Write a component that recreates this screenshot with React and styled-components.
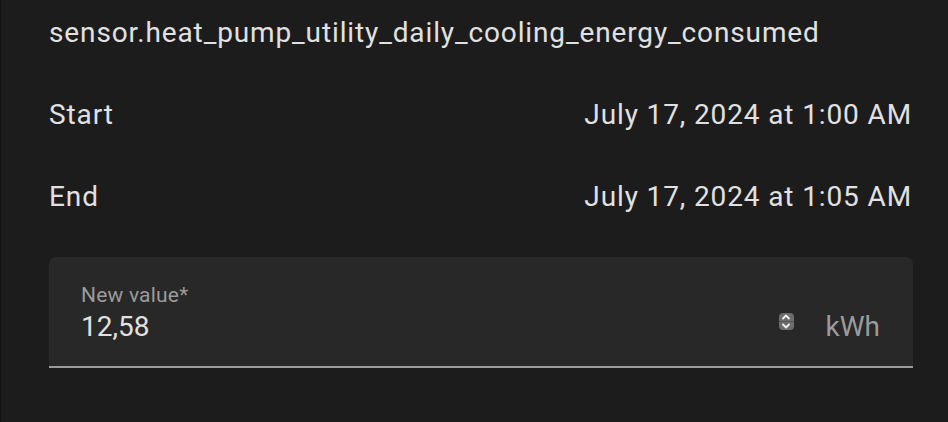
import React from "react";
import styled, { createGlobalStyle } from "styled-components";

const GlobalStyle = createGlobalStyle`
  html, body {
    margin: 0;
    padding: 0;
    background: #1c1c1c;
  }
  body {
    font-family: Roboto, "Noto Sans", "Liberation Sans", sans-serif;
    -webkit-font-smoothing: antialiased;
  }
`;

const Dialog = styled.div`
  width: 948px;
  height: 422px;
  box-sizing: border-box;
  border-left: 1px solid #131313;
  background: #1c1c1c;
  color: #e1e1e1;
  padding: 16px 35px 0 48px;
  font-size: 28px;
  line-height: 34px;
  letter-spacing: 0.875px;
`;

const EntityId = styled.div``;

const InfoRow = styled.div`
  display: flex;
  justify-content: space-between;
  margin-top: 48px;
  padding-right: 1px;
`;

const Field = styled.div`
  margin-top: 43px;
  background: #282828;
  border-radius: 7px 7px 0 0;
  border-bottom: 2px solid #9a9a9a;
  padding: 26px 33px 22px 32px;
`;

const FieldLabel = styled.div`
  font-size: 21px;
  line-height: 24px;
  letter-spacing: 0.2px;
  color: #9b9b9b;
`;

const InputRow = styled.div`
  display: flex;
  align-items: center;
  margin-top: 3px;
  letter-spacing: 0;
`;

const Value = styled.div`
  flex: 1;
`;

const Spinner = styled.div`
  width: 15px;
  height: 17px;
  border-radius: 4px;
  background: #6c6c6c;
  display: flex;
  flex-direction: column;
  align-items: center;
  justify-content: space-between;
  margin-top: -11px;
  overflow: hidden;
  svg {
    display: block;
  }
`;

const SpinDivider = styled.div`
  width: 100%;
  height: 1px;
  background: #575757;
`;

const Suffix = styled.div`
  color: #9b9b9b;
  margin-left: 32px;
`;

const Chevron = ({ up }) => (
  <svg width="10" height="8" viewBox="0 0 10 8">
    <path
      d={up ? "M2 5.5 L5 2.5 L8 5.5" : "M2 2.5 L5 5.5 L8 2.5"}
      fill="none"
      stroke="#f0f0f0"
      strokeWidth="1.8"
      strokeLinecap="round"
      strokeLinejoin="round"
    />
  </svg>
);

export default function App() {
  return (
    <>
      <GlobalStyle />
      <Dialog>
        <EntityId>sensor.heat_pump_utility_daily_cooling_energy_consumed</EntityId>
        <InfoRow>
          <span>Start</span>
          <span>July 17, 2024 at 1:00 AM</span>
        </InfoRow>
        <InfoRow>
          <span>End</span>
          <span>July 17, 2024 at 1:05 AM</span>
        </InfoRow>
        <Field>
          <FieldLabel>New value*</FieldLabel>
          <InputRow>
            <Value>12,58</Value>
            <Spinner>
              <Chevron up />
              <SpinDivider />
              <Chevron />
            </Spinner>
            <Suffix>kWh</Suffix>
          </InputRow>
        </Field>
      </Dialog>
    </>
  );
}
